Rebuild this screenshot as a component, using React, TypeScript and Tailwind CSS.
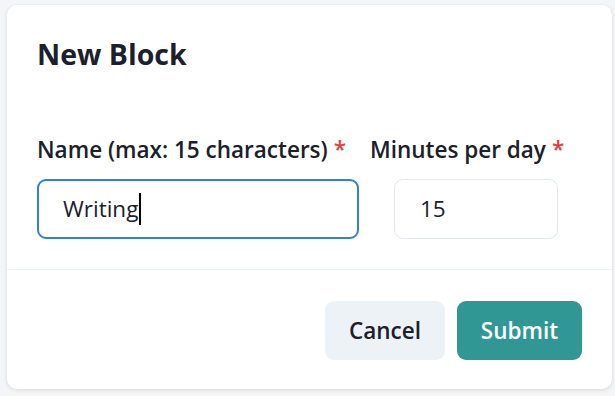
export default function App() {
    return (
        <div className="w-[615px] h-[396px] bg-[#f3f6f9] pt-[5px] pl-[7px] font-['Open_Sans',sans-serif] text-[#1a202c]">
            <div className="w-[605px] h-[384px] bg-white rounded-[10px] shadow-[0_1px_4px_rgba(0,0,0,0.12)] flex flex-col">
                <div className="px-[30px] pt-[31px]">
                    <h2 className="text-[28.5px] leading-[36px] font-bold">New Block</h2>
                </div>
                <div className="px-[30px] pt-[63px] flex">
                    <div className="w-[322px]">
                        <label className="block text-[22.5px] leading-[30px] font-semibold mb-[14px]">
                            Name (max: 15 characters)
                            <span className="text-[#e53e3e] ml-[6px]">*</span>
                        </label>
                        <div className="h-[60px] border-2 border-[#3182ce] rounded-[9px] pl-[24px] flex items-center text-[22.5px]">
                            <span>Writing</span>
                            <span className="w-[2px] h-[32px] bg-black ml-[1px]" />
                        </div>
                    </div>
                    <div className="ml-[11px] flex-1">
                        <label className="block text-[22.5px] leading-[30px] font-semibold mb-[14px]">
                            Minutes per day
                            <span className="text-[#e53e3e] ml-[6px]">*</span>
                        </label>
                        <div className="mx-auto w-[164px] h-[60px] border border-[#e2e8f0] rounded-[9px] pl-[25px] flex items-center text-[22.5px]">
                            15
                        </div>
                    </div>
                </div>
                <div className="mt-[30px] border-t border-[#edf2f7]" />
                <div className="px-[30px] pt-[31px] flex justify-end gap-[12px]">
                    <button className="w-[120px] h-[59px] rounded-[9px] bg-[#edf2f7] text-[22.5px] font-semibold">
                        Cancel
                    </button>
                    <button className="w-[125px] h-[59px] rounded-[9px] bg-[#319795] text-white text-[22.5px] font-semibold">
                        Submit
                    </button>
                </div>
            </div>
        </div>
    );
}
